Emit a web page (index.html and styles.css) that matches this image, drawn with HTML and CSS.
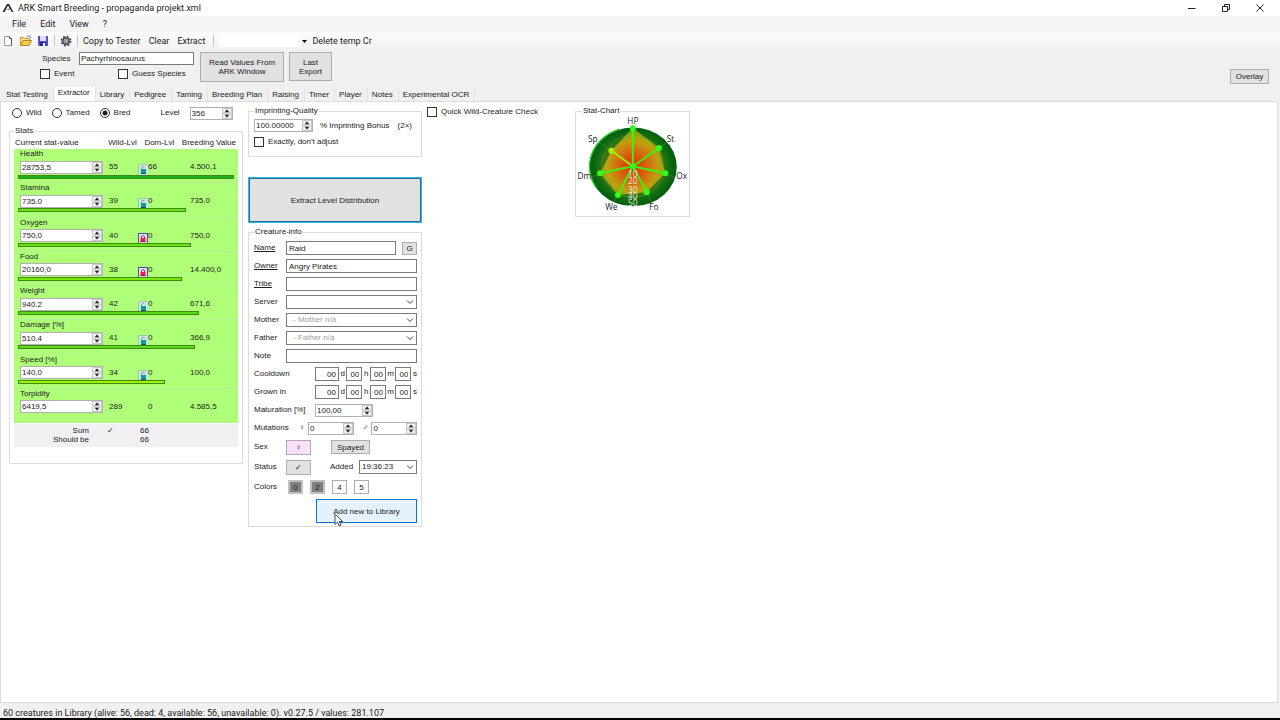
FILE: index.html
```
<!DOCTYPE html>
<html lang="en">
<head>
  <meta charset="utf-8">
  <meta name="viewport" content="width=device-width, initial-scale=1.0">
  <title>ARK Smart Breeding - propaganda projekt.xml</title>
  <link rel="stylesheet" href="styles.css">
</head>
<body>
  <!-- shared icons -->
  <svg class="sprite" width="0" height="0">
    <symbol id="spin" viewBox="0 0 11 12">
      <rect x=".5" y=".5" width="10" height="5" fill="#f0f0f0" stroke="#c4c4c4"/>
      <rect x=".5" y="6.5" width="10" height="5" fill="#f0f0f0" stroke="#c4c4c4"/>
      <path d="M3 4.5L5.500 1.500L8 4.500zM3 7.500L5.500 10.500L8 7.500z" fill="#222"/>
    </symbol>
    <symbol id="chevron" viewBox="0 0 8 6">
      <path d="M1 1.500L4 4.500L7 1.500" fill="none" stroke="#444"/>
    </symbol>
    <symbol id="unlocked" viewBox="0 0 10 11">
      <rect width="10" height="11" fill="#c9e8e4"/>
      <path d="M.5 11V.5H9.500" fill="none" stroke="#9cc8a8"/>
      <path d="M3.500 5V3.500Q5 1.500 6.500 3" fill="none" stroke="#8a9a9a"/>
      <rect x="3" y="5" width="5" height="5" fill="#129a9a"/>
      <path d="M3 9.500H8" stroke="#0c5468"/>
    </symbol>
    <symbol id="locked" viewBox="0 0 10 11">
      <rect x=".5" y=".5" width="9" height="10" fill="#e8d8f0" stroke="#3a5a9c"/>
      <path d="M3.500 5V3.500Q5 1.500 6.500 3.500V5" fill="none" stroke="#a03050"/>
      <rect x="2.500" y="5" width="5" height="4" fill="#f0204c"/>
      <path d="M2.500 8.500H7.500" stroke="#8c1838"/>
    </symbol>
  </svg>

  <header class="titlebar">
    <svg class="logo" width="12" height="10" viewBox="0 0 12 10"><path d="M.5 9L5 1H7L11.500 9H9.800L6 2.500L2.500 9zM3.500 6.500L8 5.500V6.500z" fill="#222"/></svg>
    <h1>ARK Smart Breeding - propaganda projekt.xml</h1>
    <div class="window-buttons">
      <button aria-label="Minimize"><svg width="10" height="10" viewBox="0 0 10 10"><path d="M1 5.500H8.500"/></svg></button>
      <button aria-label="Restore"><svg width="10" height="10" viewBox="0 0 10 10"><path d="M1.500 3.500H6.500V8.500H1.500zM3.500 3.500V1.500H8.500V6.500H6.500"/></svg></button>
      <button aria-label="Close"><svg width="10" height="10" viewBox="0 0 10 10"><path d="M1.500 1.500L8.500 8.500M8.500 1.500L1.500 8.500"/></svg></button>
    </div>
  </header>

  <nav class="menubar">
    <button>File</button>
    <button>Edit</button>
    <button>View</button>
    <button>?</button>
  </nav>

  <div class="toolbar">
    <button class="tool" aria-label="New"><svg width="12" height="12" viewBox="0 0 12 12"><path d="M1.500 1.500H6.500L8.500 3.500V10.500H1.500z" fill="#fff" stroke="#99a"/><path d="M6.500 1.500V3.500H8.500V10.500" fill="none" stroke="#556"/></svg></button>
    <button class="tool" aria-label="Open"><svg width="12" height="12" viewBox="0 0 12 12"><path d="M.5 10.500V2.500H4.500L5.500 3.500H9.500V5" fill="#fbe08a" stroke="#c89a30"/><path d="M.5 10.500L3 5.500H11.500L9 10.500z" fill="#f8c850" stroke="#b88820"/><path d="M7 1.500Q10 0 10.500 3" fill="none" stroke="#5878b0"/></svg></button>
    <button class="tool" aria-label="Save"><svg width="12" height="12" viewBox="0 0 12 12"><path d="M1 1H11V11H2L1 10z" fill="#5450c8"/><rect x="3" y="1" width="6" height="5" fill="#dcdcf4"/><rect x="3" y="7" width="6" height="4" fill="#2c2c88"/><rect x="6" y="8" width="2" height="3" fill="#fff"/></svg></button>
    <span class="sep"></span>
    <button class="tool" aria-label="Settings"><svg width="12" height="12" viewBox="0 0 12 12"><circle cx="6" cy="6" r="4.700" fill="none" stroke="#444c54" stroke-width="1.500" stroke-dasharray="2 1.690"/><circle cx="6" cy="6" r="3.200" fill="#b8bcc0" stroke="#444c54" stroke-width="1.500"/><circle cx="6" cy="6" r="1.300" fill="#fff" stroke="#444c54" stroke-width=".7"/></svg></button>
    <span class="sep"></span>
    <button>Copy to Tester</button>
    <button>Clear</button>
    <button>Extract</button>
    <span class="sep"></span>
    <span class="temp-creatures">
      <select aria-label="Temporary creatures"><option></option></select>
      <svg width="5" height="3" viewBox="0 0 5 3"><path d="M0 0H5L2.500 3z"/></svg>
    </span>
    <button>Delete temp Cr</button>
  </div>

  <section class="species-bar">
    <div class="species">
      <label for="species">Species</label>
      <input type="text" id="species" value="Pachyrhinosaurus">
      <div class="species-checks">
        <label class="check event"><input type="checkbox"> Event</label>
        <label class="check"><input type="checkbox"> Guess Species</label>
      </div>
    </div>
    <button class="btn read-values">Read Values From ARK Window</button>
    <button class="btn last-export">Last Export</button>
    <button class="btn overlay">Overlay</button>
  </section>

  <nav class="tabs">
    <button>Stat Testing</button>
    <button class="active">Extractor</button>
    <button>Library</button>
    <button>Pedigree</button>
    <button>Taming</button>
    <button>Breeding Plan</button>
    <button>Raising</button>
    <button>Timer</button>
    <button>Player</button>
    <button>Notes</button>
    <button>Experimental OCR</button>
  </nav>

  <main class="tab-page">
    <div class="col-stats">
      <div class="origin">
        <label class="check"><input type="radio" name="origin"> Wild</label>
        <label class="check"><input type="radio" name="origin"> Tamed</label>
        <label class="check"><input type="radio" name="origin" checked> Bred</label>
        <label class="level" for="level">Level</label>
        <span class="spin"><input type="text" id="level" value="356"><svg><use href="#spin"/></svg></span>
      </div>

      <fieldset class="stats">
        <legend>Stats</legend>
        <div class="stats-head">
          <span>Current stat-value</span>
          <span>Wild-Lvl</span>
          <span>Dom-Lvl</span>
          <span>Breeding Value</span>
        </div>
        <div class="stat-list">
          <div class="stat">
            <label for="health">Health</label>
            <span class="spin"><input type="text" id="health" value="28753,5"><svg><use href="#spin"/></svg></span>
            <span>55</span><svg class="lock"><use href="#unlocked"/></svg><span>66</span><span>4.500,1</span>
            <div class="bar full" style="width: 216px; background: #20b020"></div>
          </div>
          <div class="stat">
            <label for="stamina">Stamina</label>
            <span class="spin"><input type="text" id="stamina" value="735.0"><svg><use href="#spin"/></svg></span>
            <span>39</span><svg class="lock"><use href="#unlocked"/></svg><span>0</span><span>735.0</span>
            <div class="bar" style="width: 168px; background: #70e010"></div>
          </div>
          <div class="stat">
            <label for="oxygen">Oxygen</label>
            <span class="spin"><input type="text" id="oxygen" value="750,0"><svg><use href="#spin"/></svg></span>
            <span>40</span><svg class="lock"><use href="#locked"/></svg><span>0</span><span>750,0</span>
            <div class="bar" style="width: 173px; background: #6ce010"></div>
          </div>
          <div class="stat">
            <label for="food">Food</label>
            <span class="spin"><input type="text" id="food" value="20160,0"><svg><use href="#spin"/></svg></span>
            <span>38</span><svg class="lock"><use href="#locked"/></svg><span>0</span><span>14.400,0</span>
            <div class="bar" style="width: 164px; background: #7ce808"></div>
          </div>
          <div class="stat">
            <label for="weight">Weight</label>
            <span class="spin"><input type="text" id="weight" value="940.2"><svg><use href="#spin"/></svg></span>
            <span>42</span><svg class="lock"><use href="#unlocked"/></svg><span>0</span><span>671,6</span>
            <div class="bar" style="width: 181px; background: #58d818"></div>
          </div>
          <div class="stat">
            <label for="damage">Damage [%]</label>
            <span class="spin"><input type="text" id="damage" value="510.4"><svg><use href="#spin"/></svg></span>
            <span>41</span><svg class="lock"><use href="#unlocked"/></svg><span>0</span><span>366,9</span>
            <div class="bar" style="width: 177px; background: #60d818"></div>
          </div>
          <div class="stat">
            <label for="speed">Speed [%]</label>
            <span class="spin"><input type="text" id="speed" value="140,0"><svg><use href="#spin"/></svg></span>
            <span>34</span><svg class="lock"><use href="#unlocked"/></svg><span>0</span><span>100,0</span>
            <div class="bar" style="width: 147px; background: #a4f000"></div>
          </div>
          <div class="stat">
            <label for="torpidity">Torpidity</label>
            <span class="spin"><input type="text" id="torpidity" value="6419,5"><svg><use href="#spin"/></svg></span>
            <span>289</span><span></span><span>0</span><span>4.585,5</span>
          </div>
        </div>
        <div class="sums">
          <span>Sum</span><span>✓</span><span>66</span>
          <span>Should be</span><span></span><span>66</span>
        </div>
      </fieldset>
    </div>

    <div class="col-creature">
      <fieldset class="imprinting">
        <legend>Imprinting-Quality</legend>
        <div class="imprint-row">
          <span class="spin"><input type="text" id="imprint" value="100.00000"><svg><use href="#spin"/></svg></span>
          <label for="imprint">% Imprinting Bonus</label>
          <span>(2×)</span>
        </div>
        <label class="check"><input type="checkbox"> Exactly, don't adjust</label>
      </fieldset>

      <button class="btn extract">Extract Level Distribution</button>

      <fieldset class="creature">
        <legend>Creature-info</legend>
        <div class="row">
          <label class="link" for="name">Name</label>
          <input type="text" id="name" value="Raid">
          <button class="btn generate">G</button>
        </div>
        <div class="row">
          <label class="link" for="owner">Owner</label>
          <input type="text" id="owner" value="Angry Pirates">
        </div>
        <div class="row">
          <label class="link" for="tribe">Tribe</label>
          <input type="text" id="tribe">
        </div>
        <div class="row">
          <label for="server">Server</label>
          <span class="select"><select id="server"><option></option></select><svg><use href="#chevron"/></svg></span>
        </div>
        <div class="row">
          <label for="mother">Mother</label>
          <span class="select empty"><select id="mother"><option>- Mother n/a</option></select><svg><use href="#chevron"/></svg></span>
        </div>
        <div class="row">
          <label for="father">Father</label>
          <span class="select empty"><select id="father"><option>- Father n/a</option></select><svg><use href="#chevron"/></svg></span>
        </div>
        <div class="row">
          <label for="note">Note</label>
          <input type="text" id="note">
        </div>
        <div class="row">
          <label class="wide" for="cooldown">Cooldown</label>
          <span class="duration">
            <input type="text" id="cooldown" value="00">d<input type="text" aria-label="Cooldown hours" value="00">h<input type="text" aria-label="Cooldown minutes" value="00">m<input type="text" aria-label="Cooldown seconds" value="00">s
          </span>
        </div>
        <div class="row">
          <label class="wide" for="grown">Grown in</label>
          <span class="duration">
            <input type="text" id="grown" value="00">d<input type="text" aria-label="Grown in hours" value="00">h<input type="text" aria-label="Grown in minutes" value="00">m<input type="text" aria-label="Grown in seconds" value="00">s
          </span>
        </div>
        <div class="row">
          <label class="wide" for="maturation">Maturation [%]</label>
          <span class="spin maturation"><input type="text" id="maturation" value="100,00"><svg><use href="#spin"/></svg></span>
        </div>
        <div class="row mutations">
          <span>Mutations</span>
          <label for="mut-f">♀</label>
          <span class="spin"><input type="text" id="mut-f" value="0"><svg><use href="#spin"/></svg></span>
          <label for="mut-m">♂</label>
          <span class="spin"><input type="text" id="mut-m" value="0"><svg><use href="#spin"/></svg></span>
        </div>
        <div class="row tall">
          <label for="sex">Sex</label>
          <button class="btn state female" id="sex">♀</button>
          <button class="btn spayed">Spayed</button>
        </div>
        <div class="row tall">
          <label for="status">Status</label>
          <button class="btn state" id="status">✓</button>
          <label class="added" for="added">Added</label>
          <span class="select"><select id="added"><option>19:36:23</option></select><svg><use href="#chevron"/></svg></span>
        </div>
        <div class="row tall colors">
          <span>Colors</span>
          <button class="btn dark">0</button>
          <button class="btn dark">2</button>
          <button class="btn">4</button>
          <button class="btn">5</button>
        </div>
        <button class="btn add">Add new to Library
          <svg class="cursor" width="10" height="14" viewBox="0 0 10 14"><path d="M1 1V11.500L3.500 9.200L5.200 13L7 12.200L5.300 8.500H8.700z" fill="#fff" stroke="#333" stroke-width=".9"/></svg>
        </button>
      </fieldset>
    </div>

    <div class="col-quick">
      <label class="check"><input type="checkbox"> Quick Wild-Creature Check</label>
    </div>

    <fieldset class="chart">
      <legend>Stat-Chart</legend>
      <svg viewBox="18 48 342 303">
        <defs>
          <radialGradient id="heat" gradientUnits="userSpaceOnUse" cx="190" cy="200" r="118">
            <stop offset="0" stop-color="#e02808"/>
            <stop offset=".35" stop-color="#d86010"/>
            <stop offset=".65" stop-color="#c0a010"/>
            <stop offset="1" stop-color="#58b010"/>
          </radialGradient>
          <radialGradient id="disc">
            <stop offset=".5" stop-color="#688010"/>
            <stop offset=".8" stop-color="#187010"/>
            <stop offset="1" stop-color="#005c10"/>
          </radialGradient>
        </defs>
        <ellipse cx="191" cy="202" rx="132" ry="119" fill="url(#disc)"/>
        <path d="M150 88A132 119 0 0 0 80 266" fill="none" stroke="#20d020" stroke-width="4"/>
        <g fill="none" stroke="#78a048" stroke-opacity=".6" stroke-width="2">
          <circle cx="190" cy="200" r="46"/><circle cx="190" cy="200" r="70"/><circle cx="190" cy="200" r="94"/>
          <path d="M190 200L294 128M190 200L316 232M190 200L246 306M190 200L134 306M190 200L64 232M190 200L88 128"/>
        </g>
        <path d="M190 84L269 145L288 221L232 279L145 287L91 221L125 153z" fill="url(#heat)"/>
        <path d="M190 200V84M190 200L269 145M190 200L288 221M190 200L232 279M190 200L145 287M190 200L91 221" stroke="#40f010" stroke-width="6"/>
        <path d="M190 200L125 153" stroke="#a0f000" stroke-width="6"/>
        <g fill="#30ff20">
          <circle cx="190" cy="84" r="9"/><circle cx="269" cy="145" r="9"/><circle cx="288" cy="221" r="9"/>
          <circle cx="232" cy="279" r="9"/><circle cx="145" cy="287" r="9"/><circle cx="91" cy="221" r="9"/>
          <circle cx="125" cy="153" r="9" fill="#a8f000"/><circle cx="190" cy="200" r="8"/>
        </g>
        <g class="scale">
          <text x="190" y="232">10</text><text x="190" y="254">20</text><text x="190" y="280">30</text>
          <text x="190" y="300">40</text><text x="190" y="319">50</text>
        </g>
        <g class="axes">
          <text x="190" y="72">HP</text><text x="304" y="126">St</text><text x="338" y="238">Ox</text>
          <text x="254" y="333">Fo</text><text x="125" y="333">We</text><text x="43" y="238">Dm</text><text x="69" y="126">Sp</text>
        </g>
      </svg>
    </fieldset>
  </main>

  <footer class="statusbar">60 creatures in Library (alive: 56, dead: 4, available: 56, unavailable: 0). v0.27.5 / values: 281.107</footer>
</body>
</html>
```
FILE: styles.css
```
* {
  box-sizing: border-box;
}

html, body {
  margin: 0;
  padding: 0;
}

body {
  display: flex;
  flex-direction: column;
  min-height: 100vh;
  background: #f0f0f0;
  color: #222;
  font: 8px/10px "Liberation Sans", Arial, sans-serif;
}

button, input, select {
  margin: 0;
  padding: 0;
  border: 0;
  border-radius: 0;
  background: none;
  color: inherit;
  font: inherit;
}

.sprite {
  position: absolute;
}

/* window chrome */

.titlebar, .menubar, .toolbar, .statusbar {
  display: flex;
  align-items: center;
  font-family: Roboto, "Segoe UI", sans-serif;
  font-size: 9px;
  color: #222;
}

.titlebar {
  height: 16px;
  padding: 0 3px 0 2px;
  background: #fff;
}

.titlebar h1 {
  flex: 1;
  margin: 0 0 0 4px;
  font-size: 9px;
  font-weight: normal;
}

.window-buttons {
  display: flex;
}

.window-buttons button {
  display: flex;
  justify-content: center;
  width: 34px;
}

.window-buttons path {
  fill: none;
  stroke: #222;
}

.menubar {
  height: 16px;
  padding-left: 12px;
  gap: 14px;
  background: #f4f4f5;
}

.toolbar {
  height: 17px;
  padding-left: 3px;
  gap: 5px;
  background: linear-gradient(#fcfcfc, #f2f2f2);
}

.toolbar button {
  margin-right: 3px;
}

.toolbar .tool {
  display: flex;
  width: 12px;
  margin-right: 0;
}

.toolbar .sep {
  width: 1px;
  height: 11px;
  background: #c4c4c4;
}

.temp-creatures {
  position: relative;
  width: 88px;
  height: 12px;
}

.temp-creatures select {
  display: block;
  width: 82px;
  height: 12px;
  background: #fff;
  appearance: none;
}

.temp-creatures svg {
  position: absolute;
  right: 0;
  top: 5px;
}

/* common controls */

input[type="text"] {
  height: 14px;
  min-width: 0;
  padding: 0 2px;
  border: 1px solid #7a7a7a;
  background: #fff;
}

input[type="checkbox"], input[type="radio"] {
  flex: none;
  width: 10px;
  height: 10px;
  border: 1px solid #333;
  background: #fff;
  appearance: none;
}

input[type="radio"] {
  border-radius: 50%;
}

input[type="radio"]:checked {
  background: radial-gradient(#222 0 2px, #fff 3px);
}

.check {
  display: flex;
  align-items: center;
  gap: 4px;
}

.btn {
  border: 1px solid #adadad;
  background: #e1e1e1;
  line-height: 9px;
  text-align: center;
}

.spin {
  display: flex;
  height: 13px;
  border: 1px solid #b0b0b0;
  background: #fff;
}

.spin input[type="text"] {
  flex: 1;
  width: 0;
  height: 11px;
  padding: 0 1px;
  border: 0;
}

.spin svg {
  flex: none;
  width: 10px;
  height: 11px;
}

.select {
  position: relative;
  flex: 1;
  height: 14px;
}

.select select {
  display: block;
  width: 100%;
  height: 14px;
  padding: 0 2px;
  border: 1px solid #7a7a7a;
  background: #fff;
  appearance: none;
}

.select.empty select {
  padding-left: 6px;
  color: #a0a0a0;
}

.select svg {
  position: absolute;
  right: 3px;
  top: 4px;
  width: 8px;
  height: 6px;
  pointer-events: none;
}

fieldset {
  min-width: 0;
  margin: 0;
  padding: 0 5px;
  border: 1px solid #dcdcdc;
}

legend {
  height: 10px;
  padding: 0 1px;
}

/* species header */

.species-bar {
  display: flex;
  align-items: flex-start;
  height: 38px;
  padding: 3px 11px 0 40px;
}

.species {
  display: grid;
  grid-template-columns: 39px 115px;
  row-gap: 4px;
  align-items: center;
}

.species > label {
  padding-left: 2px;
}

.species input[type="text"] {
  height: 13px;
  padding: 0 1px;
}

.species-checks {
  display: flex;
  grid-column: 1 / 3;
}

.event {
  width: 78px;
}

.read-values {
  width: 84px;
  height: 30px;
  margin: 0 5px 0 6px;
  padding: 0 6px;
}

.last-export {
  width: 43px;
  height: 29px;
  padding: 0 8px;
}

.overlay {
  width: 39px;
  height: 15px;
  margin: 17px 0 0 auto;
}

/* tabs */

.tabs {
  display: flex;
  align-items: flex-end;
  height: 14px;
  padding-left: 2px;
}

.tabs button {
  height: 13px;
  padding: 0 5px 0 4px;
  border-right: 1px solid #e2e2e2;
  white-space: nowrap;
}

.tabs .active {
  height: 14px;
  padding-bottom: 2px;
  background: #fff;
}

.tab-page {
  display: flex;
  flex: 1;
  align-items: flex-start;
  margin-right: 2px;
  padding: 4px 8px;
  border: 1px solid #dcdcdc;
  background: #fff;
}

/* stats */

.col-stats {
  width: 234px;
  margin-right: 5px;
}

.origin {
  display: flex;
  align-items: center;
  height: 14px;
  padding-left: 3px;
  gap: 10px;
}

.origin .level {
  margin-left: 20px;
}

.origin .spin {
  width: 43px;
}

.stats {
  margin-top: 6px;
  padding: 0 4px 16px;
}

.stats-head {
  display: flex;
  align-items: center;
  justify-content: space-between;
  height: 13px;
  padding: 0 2px 0 1px;
}

.stats-head span:first-child {
  margin-right: 22px;
}

.stat-list {
  display: grid;
  grid-auto-rows: 1fr;
  height: 274px;
  background: #b0ff78;
}

.stat {
  display: grid;
  grid-template-columns: 89px 29px 10px 42px 1fr;
  grid-template-rows: 11px 14px 4px;
  align-content: start;
  align-items: center;
  padding-left: 6px;
  border-bottom: 1px solid #b4f094;
}

.stat label {
  grid-column: 1 / 6;
  align-self: start;
}

.stat .spin {
  width: 83px;
}

.stat .lock {
  width: 10px;
  height: 11px;
  margin-top: 5px;
}

.bar {
  grid-column: 1 / 6;
  height: 4px;
  margin-left: -2px;
  border: 1px solid #3c8c14;
}

.bar.full {
  margin-top: 1px;
}

.sums {
  display: grid;
  grid-template-columns: 75px 18px 1fr;
  column-gap: 12px;
  margin-top: 1px;
  padding: 2px 0 3px;
  background: #f1f1f3;
  line-height: 9px;
}

.sums span:nth-child(3n + 1) {
  text-align: right;
}

.sums span:nth-child(3n + 2) {
  padding-left: 6px;
}

.sums span:nth-child(3n) {
  padding-left: 9px;
}

/* creature column */

.col-creature {
  width: 174px;
  margin-right: 5px;
}

.imprinting {
  height: 51px;
}

.imprint-row {
  display: flex;
  align-items: center;
  margin: 3px 0 5px;
}

.imprint-row .spin {
  width: 59px;
  margin-right: 7px;
}

.imprint-row label {
  flex: 1;
}

.imprint-row span:last-child {
  margin-right: 4px;
}

.extract {
  display: block;
  width: 100%;
  height: 46px;
  margin: 20px 0 4px;
  border: 1px solid #30b8f0;
  outline: 1px solid #28688c;
  outline-offset: -2px;
}

.creature {
  padding: 2px 4px 3px 5px;
}

.row {
  display: flex;
  align-items: center;
  height: 18px;
}

.row.tall {
  height: 20px;
}

.row > :first-child {
  flex: none;
  width: 32px;
}

.row > .wide {
  width: 61px;
}

.row > input {
  flex: 1;
}

.link {
  text-decoration: underline;
}

.generate {
  width: 15px;
  height: 13px;
  margin-left: 6px;
}

.duration {
  display: flex;
  flex: 1;
  align-items: center;
  justify-content: space-between;
}

.duration input[type="text"] {
  width: 16px;
  text-align: right;
}

.duration input[type="text"]:first-child {
  width: 24px;
}

.maturation {
  width: 58px;
}

.row.mutations > :first-child {
  width: 45px;
}

.mutations label {
  width: 9px;
}

.mutations .spin {
  width: 46px;
  margin-right: 9px;
}

.mutations .spin:last-child {
  margin: 0;
}

.state {
  width: 25px;
  height: 15px;
}

.female {
  background: #fbe0fb;
}

.spayed {
  width: 39px;
  height: 14px;
  margin-left: 20px;
}

.added {
  width: 29px;
  margin-left: 19px;
}

.row.colors > :first-child {
  width: 34px;
}

.colors .btn {
  width: 15px;
  height: 14px;
  margin-right: 7px;
  background: #fff;
}

.colors .dark {
  border: 2px solid #c0c0c0;
  background: #808080;
}

.add {
  position: relative;
  display: block;
  width: 101px;
  height: 24px;
  margin: 2px 0 0 auto;
  border-color: #0078d7;
  background: #e5f1fb;
}

.cursor {
  position: absolute;
  left: 17px;
  top: 13px;
}

/* right side */

.col-quick {
  width: 148px;
  padding-top: 1px;
}

.chart {
  width: 115px;
  padding: 0;
}

.chart legend {
  margin-left: 6px;
}

.chart svg {
  display: block;
  width: 100%;
}

.chart text {
  font-family: "Open Sans", sans-serif;
  font-size: 25px;
  text-anchor: middle;
  fill: #222;
}

.chart .scale text {
  fill: #f0e8e0;
}

.statusbar {
  height: 17px;
  padding: 4px 3px 0;
  border-bottom: 2px solid #000;
}
```
